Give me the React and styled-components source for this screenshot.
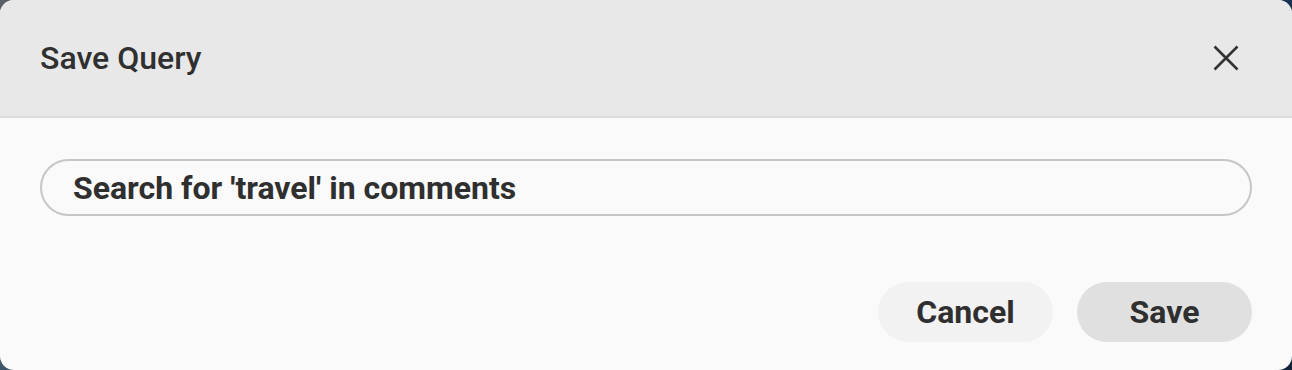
import styled, { createGlobalStyle } from "styled-components";

const GlobalStyle = createGlobalStyle`
  html, body {
    margin: 0;
    padding: 0;
    height: 100%;
  }
  body {
    background: linear-gradient(135deg, #5b5f66 0%, #1f4a70 45%, #13243a 100%);
    font-family: Roboto, "Liberation Sans", sans-serif;
    overflow: hidden;
  }
`;

const Dialog = styled.div`
  width: 1292px;
  height: 370px;
  box-sizing: border-box;
  background: #fafafa;
  border-radius: 14px;
  overflow: hidden;
  display: flex;
  flex-direction: column;
`;

const Header = styled.header`
  height: 116px;
  flex-shrink: 0;
  display: flex;
  align-items: center;
  justify-content: space-between;
  padding: 0 40px;
  background: #e8e8e8;
  border-bottom: 2px solid #dcdcdc;
`;

const Title = styled.h2`
  margin: 0;
  font-size: 32px;
  font-weight: 500;
  color: #303030;
`;

const CloseButton = styled.button`
  width: 44px;
  height: 44px;
  margin-right: 4px;
  border: none;
  background: transparent;
  display: flex;
  align-items: center;
  justify-content: center;
  padding: 0;
  cursor: pointer;
  color: #333;
`;

const Body = styled.div`
  padding: 41px 40px 0;
`;

const NameInput = styled.input`
  width: 100%;
  height: 57px;
  box-sizing: border-box;
  border: 2px solid #c6c6c6;
  border-radius: 999px;
  background: #fafafa;
  padding: 0 31px;
  font-family: Roboto, "Liberation Sans", sans-serif;
  font-size: 32px;
  font-weight: 700;
  color: #2f2f2f;
  outline: none;
`;

const Footer = styled.footer`
  display: flex;
  justify-content: flex-end;
  gap: 24px;
  padding: 66px 40px 0;
`;

const Button = styled.button`
  width: 175px;
  height: 60px;
  border: none;
  border-radius: 999px;
  background: ${(props) => (props.$primary ? "#e0e0e0" : "#f2f2f2")};
  font-family: Roboto, "Liberation Sans", sans-serif;
  font-size: 32px;
  font-weight: 700;
  color: #2f2f2f;
  cursor: pointer;
`;

export default function App() {
  return (
    <>
      <GlobalStyle />
      <Dialog role="dialog">
        <Header>
          <Title>Save Query</Title>
          <CloseButton aria-label="Close">
            <svg width="26" height="26" viewBox="0 0 26 26" fill="none">
              <path
                d="M1.5 1.5L24.5 24.5M24.5 1.5L1.5 24.5"
                stroke="currentColor"
                strokeWidth="2.6"
              />
            </svg>
          </CloseButton>
        </Header>
        <Body>
          <NameInput defaultValue="Search for 'travel' in comments" />
        </Body>
        <Footer>
          <Button>Cancel</Button>
          <Button $primary>Save</Button>
        </Footer>
      </Dialog>
    </>
  );
}
